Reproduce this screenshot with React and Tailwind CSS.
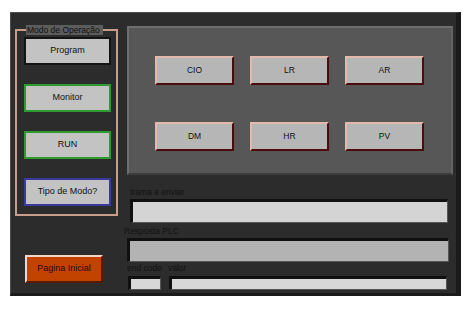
const modeButtons = [
  { label: "Program", border: "border-[#141414]" },
  { label: "Monitor", border: "border-[#2f9a2f]" },
  { label: "RUN", border: "border-[#2f9a2f]" },
  { label: "Tipo de Modo?", border: "border-[#3a3a9c]" },
];

const areaRows = [
  ["CIO", "LR", "AR"],
  ["DM", "HR", "PV"],
];

function AreaButton({ label }) {
  return (
    <button className="flex h-[29px] w-[79px] items-center justify-center border-2 border-t-[#e3b8ad] border-l-[#e3b8ad] border-r-[#4a0c0c] border-b-[#4a0c0c] bg-[#b6b6b6] text-[#111]">
      {label}
    </button>
  );
}

function Field({ className }) {
  return (
    <div
      className={
        "border-t-[3px] border-l-[3px] border-r border-b border-t-[#101010] border-l-[#101010] border-r-[#555] border-b-[#555] " +
        className
      }
    />
  );
}

export default function App() {
  return (
    <div
      className="h-[310px] w-[474px] bg-white pl-[10px] pt-[12px] text-[8.5px]"
      style={{ fontFamily: '"Liberation Sans", Arial, sans-serif' }}
    >
      <div className="flex h-[284px] w-[451px] border-t border-l border-r-[5px] border-b-[3px] border-t-[#4e4e4e] border-l-[#4e4e4e] border-r-[#1b1b1b] border-b-[#1b1b1b] bg-[#2c2c2c]">
        {/* left column */}
        <div className="flex w-[112px] flex-col pl-[4px] pt-[16px]">
          <div className="relative h-[187px] w-[103px] border-2 border-[#c79e8c] px-[7px] pt-[6px]">
            <span className="absolute left-[9px] top-[-6px] bg-[#5c5c5c] pl-[1px] pr-[3px] leading-[10px] text-[#111]">
              Modo de Operação
            </span>
            <div className="flex flex-col gap-[19px]">
              {modeButtons.map((b) => (
                <button
                  key={b.label}
                  className={
                    "flex h-[28px] w-[87px] items-center justify-center border-2 bg-[#c3c3c3] text-[9px] text-[#111] " +
                    b.border
                  }
                >
                  {b.label}
                </button>
              ))}
            </div>
          </div>
          <button className="ml-[10px] mt-[39px] flex h-[28px] w-[78px] items-center justify-center border-2 border-t-[#f2d6c8] border-l-[#f2d6c8] border-r-[#5a1a00] border-b-[#5a1a00] bg-[#c24200] text-[9px] text-[#2a0800]">
            Pagina Inicial
          </button>
        </div>

        {/* right column */}
        <div className="flex flex-1 flex-col pl-[4px] pt-[13px]">
          <div className="flex h-[149px] w-[326px] flex-col gap-[37px] border-2 border-t-[#6e6e6e] border-l-[#6e6e6e] border-r-[#646464] border-b-[#3c3c3c] bg-[#575757] pl-[26px] pt-[28px]">
            {areaRows.map((row, i) => (
              <div key={i} className="flex gap-[16px]">
                {row.map((l) => (
                  <AreaButton key={l} label={l} />
                ))}
              </div>
            ))}
          </div>

          <span className="ml-[3px] mt-[11px] leading-[12px] text-[#121212]">trama a enviar</span>
          <Field className="ml-[3px] mt-[1px] h-[24px] w-[318px] bg-[#d4d4d4]" />

          <span className="ml-[-3px] mt-[2px] leading-[12px] text-[#121212]">Resposta PLC</span>
          <Field className="mt-[1px] h-[24px] w-[322px] bg-[#b3b3b3]" />

          <div className="mt-[1px] flex leading-[11px] text-[#121212]">
            <span className="w-[41px]">end code</span>
            <span>valor</span>
          </div>
          <div className="ml-[1px] mt-[2px] flex gap-[8px]">
            <Field className="h-[14px] w-[33px] bg-[#d8d8d8]" />
            <Field className="h-[14px] w-[278px] bg-[#d8d8d8]" />
          </div>
        </div>
      </div>
    </div>
  );
}
